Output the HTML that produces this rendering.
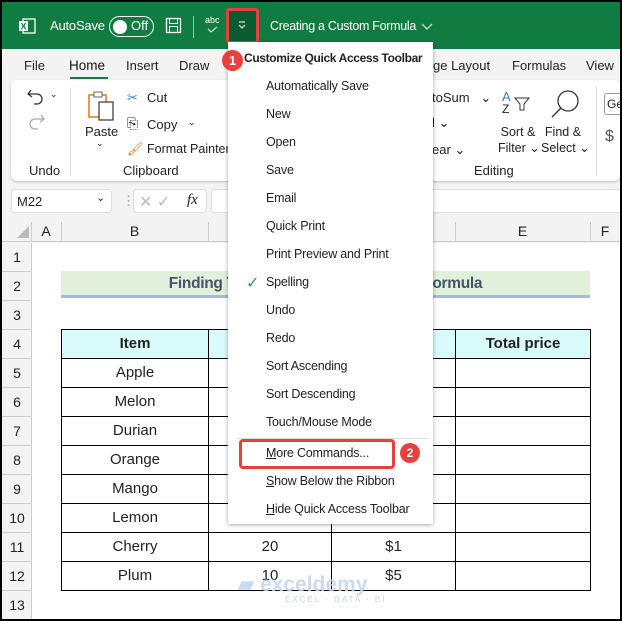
<!DOCTYPE html>
<html><head><style>
*{margin:0;padding:0;box-sizing:border-box}
body{width:622px;height:621px;overflow:hidden;background:#000;font-family:"Liberation Sans",sans-serif;font-size:13px;color:#222;position:relative}
.a{position:absolute;white-space:nowrap}
.c{text-align:center}
</style></head><body>
<div class="a" style="left:2px;top:2px;width:618px;height:617px;background:#f3f3f3;overflow:hidden">
<div class="a" style="left:0;top:0;width:618px;height:47px;background:#107c41"></div>
<svg class="a" style="left:16px;top:16px" width="18" height="16"><rect x="5" y="1" width="12" height="14" fill="none" stroke="#fff" stroke-width="1.3"/><rect x="1" y="3" width="9" height="10" fill="#fff"/><text x="2.5" y="11.5" font-size="9" font-weight="bold" fill="#107c41" font-family="Liberation Sans">X</text></svg>
<div class="a" style="left:48px;top:16px;color:#fff;font-size:13px;letter-spacing:-0.2px">AutoSave</div>
<div class="a" style="left:107px;top:14px;width:45px;height:21px;border:1.5px solid #fff;border-radius:11px"></div>
<div class="a" style="left:111px;top:18px;width:14px;height:14px;background:#fff;border-radius:50%"></div>
<div class="a" style="left:129px;top:16px;color:#fff;font-size:13px">Off</div>
<svg class="a" style="left:163px;top:15px" width="18" height="18"><rect x="1.5" y="1.5" width="14" height="14" fill="none" stroke="#fff" stroke-width="1.3"/><rect x="4.5" y="1.5" width="8" height="5" fill="none" stroke="#fff"/><rect x="4.5" y="9.5" width="8" height="6" fill="none" stroke="#fff"/></svg>
<div class="a" style="left:191px;top:14px;width:1px;height:22px;background:#9cc9ad"></div>
<div class="a" style="left:203px;top:13px;color:#fff;font-size:9px">abc</div>
<svg class="a" style="left:205px;top:24px" width="12" height="8"><path d="M1 3 L4 6 L10 1" stroke="#fff" fill="none"/></svg>
<div class="a" style="left:224px;top:6px;width:33px;height:36px;border:3px solid #e8403c;border-radius:3px;background:#0b5c31"></div>
<svg class="a" style="left:235px;top:19px" width="10" height="8"><path d="M2 1 H8 M2 4 L5 7 L8 4" stroke="#fff" fill="none"/></svg>
<div class="a" style="left:268px;top:17px;color:#fff;font-size:12.5px;letter-spacing:-0.3px">Creating a Custom Formula</div>
<svg class="a" style="left:419px;top:21px" width="12" height="8"><path d="M1 1 L6 6 L11 1" stroke="#fff" fill="none"/></svg>
<div class="a" style="left:22px;top:56px">File</div>
<div class="a" style="left:67px;top:56px;font-size:13.5px;color:#111">Home</div>
<div class="a" style="left:68px;top:75px;width:38px;height:2px;background:#107c41"></div>
<div class="a" style="left:124px;top:56px">Insert</div>
<div class="a" style="left:177px;top:56px">Draw</div>
<div class="a" style="left:431px;top:56px">ge Layout</div>
<div class="a" style="left:510px;top:56px">Formulas</div>
<div class="a" style="left:584px;top:56px">View</div>
<div class="a" style="left:9px;top:78px;width:609px;height:101px;background:#fff;border-radius:6px;box-shadow:0 1px 2px #bbb"></div>
<svg class="a" style="left:24px;top:86px" width="20" height="18"><path d="M5 2 L2 6 L6 9 M2 6 H11 A5 5 0 0 1 11 16 H8" stroke="#333" fill="none" stroke-width="1.3"/></svg>
<div class="a" style="left:48px;top:87px;font-size:9px">⌄</div>
<svg class="a" style="left:24px;top:111px" width="20" height="18"><path d="M15 2 L18 6 L14 9 M18 6 H9 A5 5 0 0 0 9 16 H12" stroke="#aaa" fill="none" stroke-width="1.3"/></svg>
<div class="a" style="left:27px;top:161px">Undo</div>
<div class="a" style="left:68px;top:86px;width:1px;height:88px;background:#ddd"></div>
<svg class="a" style="left:85px;top:88px" width="32" height="32"><rect x="2" y="5" width="17" height="22" fill="#fff" stroke="#e07a10" stroke-width="1.5"/><rect x="7" y="2" width="8" height="5" fill="#fff" stroke="#666"/><rect x="12" y="12" width="14" height="18" fill="#fff" stroke="#333" stroke-width="1.2"/></svg>
<div class="a" style="left:83px;top:122px">Paste</div>
<div class="a" style="left:94px;top:136px;font-size:9px">⌄</div>
<div class="a" style="left:125px;top:88px;color:#3a7fc4">✂</div>
<div class="a" style="left:145px;top:88px">Cut</div>
<div class="a" style="left:125px;top:113px;font-size:14px">⎘</div>
<div class="a" style="left:145px;top:115px">Copy</div>
<div class="a" style="left:186px;top:115px;font-size:9px">⌄</div>
<div class="a" style="left:125px;top:139px;color:#e07a10">🖌</div>
<div class="a" style="left:145px;top:140px;font-size:12.5px">Format Painter</div>
<div class="a" style="left:121px;top:161px">Clipboard</div>
<div class="a" style="left:430px;top:88px">toSum&nbsp;&nbsp;&nbsp;⌄</div>
<div class="a" style="left:430px;top:113px">l ⌄</div>
<div class="a" style="left:430px;top:140px">ear ⌄</div>
<div class="a" style="left:500px;top:87px;color:#3a7fc4;font-size:13px">A</div>
<div class="a" style="left:500px;top:100px;font-size:12px">Z</div>
<svg class="a" style="left:512px;top:95px" width="16" height="14"><path d="M1 1 H15 L10 7 V13 H6 V7 Z" stroke="#333" fill="none"/></svg>
<svg class="a" style="left:546px;top:86px" width="34" height="34"><circle cx="20" cy="13" r="10" stroke="#333" fill="none" stroke-width="1.3"/><path d="M13 20 L4 29" stroke="#333" stroke-width="1.3"/></svg>
<div class="a c" style="left:496px;top:122px;width:40px;line-height:16px;font-size:12.5px">Sort &amp;<br>Filter ⌄</div>
<div class="a c" style="left:539px;top:122px;width:44px;line-height:16px;font-size:12.5px">Find &amp;<br>Select ⌄</div>
<div class="a" style="left:472px;top:161px">Editing</div>
<div class="a" style="left:594px;top:84px;width:1px;height:90px;background:#ddd"></div>
<div class="a" style="left:602px;top:91px;width:30px;height:22px;border:1px solid #999;border-radius:3px;padding:3px 2px;font-size:12px">Ge</div>
<div class="a" style="left:603px;top:126px;font-size:16px;color:#555">$</div>
<div class="a" style="left:9px;top:187px;width:101px;height:24px;background:#fff;border:1px solid #ddd;border-radius:4px"></div>
<div class="a" style="left:15px;top:192px">M22</div>
<div class="a" style="left:94px;top:189px;font-size:11px">⌄</div>
<div class="a" style="left:120px;top:191px;color:#999">⋮</div>
<div class="a" style="left:131px;top:187px;width:74px;height:24px;background:#fff;border:1px solid #ddd;border-radius:4px"></div>
<div class="a" style="left:137px;top:190px;color:#bbb;font-size:16px">✕ ✓</div>
<div class="a" style="left:185px;top:190px;font-family:'Liberation Serif',serif;font-style:italic;font-size:15px">fx</div>
<div class="a" style="left:209px;top:187px;width:420px;height:24px;background:#fff;border:1px solid #ddd;border-radius:4px"></div>
<div class="a" style="left:0;top:218px;width:618px;height:22px;background:#f3f3f3;border-bottom:1px solid #ccc"></div>
<svg class="a" style="left:14px;top:223px" width="14" height="14"><path d="M13 1 V13 H1 Z" fill="#bbb"/></svg>
<div class="a c" style="left:29px;top:221px;width:30px;font-size:14px">A</div>
<div class="a c" style="left:59px;top:221px;width:147px;font-size:14px">B</div>
<div class="a c" style="left:453px;top:221px;width:135px;font-size:14px">E</div>
<div class="a c" style="left:588px;top:221px;width:30px;font-size:14px">F</div>
<div class="a" style="left:29px;top:220px;width:1px;height:20px;background:#ccc"></div>
<div class="a" style="left:59px;top:220px;width:1px;height:20px;background:#ccc"></div>
<div class="a" style="left:206px;top:220px;width:1px;height:20px;background:#ccc"></div>
<div class="a" style="left:453px;top:220px;width:1px;height:20px;background:#ccc"></div>
<div class="a" style="left:588px;top:220px;width:1px;height:20px;background:#ccc"></div>
<div class="a" style="left:30px;top:241px;width:588px;height:376px;background:#fff"></div>
<div class="a" style="left:0;top:241px;width:30px;height:376px;background:#f3f3f3;border-right:1px solid #ccc"></div>
<div id="rh"></div>
<div class="a c" style="left:59px;top:269px;width:529px;height:27px;background:#e2efda;border-bottom:3px solid #a4b8e0;font-weight:bold;font-size:15.5px;color:#44546a;line-height:26px;letter-spacing:-0.3px">Finding Total Price Using a Custom Formula</div>
<div id="tbl"></div>
<div class="a" style="left:236px;top:570px;color:#c7d6ef;font-size:21px;font-weight:bold;opacity:.9">▰ exceldemy</div>
<div class="a" style="left:283px;top:593px;color:#c9d2dd;font-size:8px;letter-spacing:2px">EXCEL · DATA · BI</div>
<div class="a" style="left:226px;top:40px;width:205px;height:482px;background:#fff;box-shadow:0 1px 4px rgba(0,0,0,.35)"></div>
<div class="a" style="left:242px;top:49px;font-weight:bold;font-size:12px;letter-spacing:-0.35px">Customize Quick Access Toolbar</div>
<div class="a" style="left:220px;top:48px;width:21px;height:21px;background:#e8403c;border-radius:50%;color:#fff;font-weight:bold;font-size:13px;text-align:center;line-height:21px">1</div>
<div id="menu"></div>
<div class="a" style="left:236px;top:436px;width:190px;height:1px;background:#ddd"></div>
<div class="a" style="left:237px;top:437px;width:156px;height:30px;border:3px solid #e8403c;border-radius:4px"></div>
<div class="a" style="left:398px;top:441px;width:20px;height:20px;background:#e8403c;border-radius:50%;color:#fff;font-weight:bold;font-size:12px;text-align:center;line-height:20px">2</div>
</div>
<script>
var h='';
for(var i=1;i<=13;i++){var t=241+(i-1)*29;h+='<div class="a c" style="left:0;top:'+t+'px;width:30px;height:29px;border-bottom:1px solid #ccc;line-height:29px;font-size:14px">'+i+'</div>';}
document.getElementById('rh').outerHTML=h;
var items=[["Item","","","Total price"],["Apple"],["Melon"],["Durian"],["Orange"],["Mango"],["Lemon"],["Cherry","20","$1"],["Plum","10","$5"]];
var xs=[59,206,329,453,588],t='';
for(var r=0;r<9;r++){var y=327+r*29;
for(var c=0;c<4;c++){var v=(items[r][c]||'');
t+='<div class="a c" style="left:'+xs[c]+'px;top:'+y+'px;width:'+(xs[c+1]-xs[c]+1)+'px;height:30px;border:1px solid #000;line-height:28px;font-size:15px;'+(r==0?'background:#d9fbfb;font-weight:bold;':'')+'">'+v+'</div>';}}
document.getElementById('tbl').outerHTML=t;
var m=["Automatically Save","New","Open","Save","Email","Quick Print","Print Preview and Print","Spelling","Undo","Redo","Sort Ascending","Sort Descending","Touch/Mouse Mode"],s='';
for(var k=0;k<m.length;k++){s+='<div class="a" style="left:264px;top:'+(77+k*28)+'px;font-size:12.5px;letter-spacing:-0.2px">'+m[k]+'</div>';}
s+='<div class="a" style="left:244px;top:271px;color:#2e9e48;font-size:16px">✓</div>';
var u=[["M","ore Commands...",444],["S","how Below the Ribbon",472],["H","ide Quick Access Toolbar",500]];
for(var k=0;k<3;k++)s+='<div class="a" style="left:264px;top:'+u[k][2]+'px;font-size:12.5px;letter-spacing:-0.2px"><u>'+u[k][0]+'</u>'+u[k][1]+'</div>';
document.getElementById('menu').outerHTML=s;
</script>
</body></html>
